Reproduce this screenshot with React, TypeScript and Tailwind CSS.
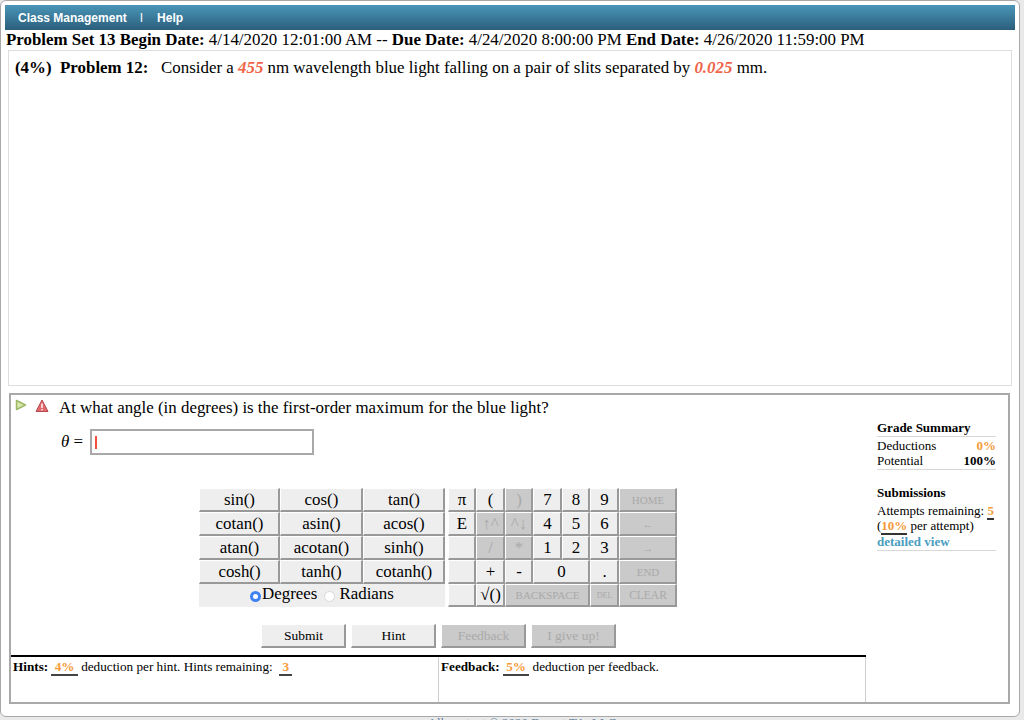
import { ReactNode } from 'react';

const funcs = [
  ['sin()', 'cos()', 'tan()'],
  ['cotan()', 'asin()', 'acos()'],
  ['atan()', 'acotan()', 'sinh()'],
  ['cosh()', 'tanh()', 'cotanh()'],
];

function Key({ children, off, className }: { children?: ReactNode; off?: boolean; className?: string }) {
  return (
    <div
      className={`flex items-center justify-center overflow-hidden pt-[1px] pl-[1px] border-t border-l border-t-white border-l-white border-r-2 border-b-2 border-r-[#999] border-b-[#999] ${
        off ? 'bg-[#cacaca] text-[#a9a9a9]' : 'bg-[#eeeeee] text-black'
      } ${className ?? ''}`}
    >
      {children}
    </div>
  );
}

function Pct({ children, className }: { children: ReactNode; className?: string }) {
  return <span className={`font-bold text-[#f59a37] border-b-2 border-b-[#444] ${className ?? ''}`}>{children}</span>;
}

function Calculator() {
  return (
    <div className="flex ml-[188px] mt-[33px] text-[16.9px] leading-none">
      <div className="w-[246px]">
        <div className="grid grid-cols-[81px_83px_82px] grid-rows-[24px_24px_24px_24px]">
          {funcs.flat().map(f => (
            <Key key={f}>{f}</Key>
          ))}
        </div>
        <div className="flex items-center justify-center h-[23px] bg-[#eeeeee] pb-[3px]">
          <span className="mt-[5px] mr-[1px] w-[11px] h-[11px] rounded-full bg-white border-[3px] border-[#3f82f2]" />
          <span>Degrees</span>
          <span className="mt-[5px] ml-[7px] mr-[4px] w-[11px] h-[11px] rounded-full bg-white border border-[#d8d8d8]" />
          <span>Radians</span>
        </div>
      </div>
      <div className="ml-[3px] grid grid-cols-[28px_29px_28px_29px_28px_29px_58px] grid-rows-[24px_24px_24px_24px_23px]">
        <Key>π</Key>
        <Key>(</Key>
        <Key off>)</Key>
        <Key>7</Key>
        <Key>8</Key>
        <Key>9</Key>
        <Key off className="text-[11px]">HOME</Key>

        <Key>E</Key>
        <Key off>↑^</Key>
        <Key off>^↓</Key>
        <Key>4</Key>
        <Key>5</Key>
        <Key>6</Key>
        <Key off className="text-[11px]">←</Key>

        <Key />
        <Key off>/</Key>
        <Key off>*</Key>
        <Key>1</Key>
        <Key>2</Key>
        <Key>3</Key>
        <Key off className="text-[11px]">→</Key>

        <Key />
        <Key>+</Key>
        <Key>-</Key>
        <Key className="col-span-2">0</Key>
        <Key>.</Key>
        <Key off className="text-[11px]">END</Key>

        <Key />
        <Key>√()</Key>
        <Key off className="col-span-3 text-[11px]">BACKSPACE</Key>
        <Key off className="text-[8px]">DEL</Key>
        <Key off className="text-[11.5px]">CLEAR</Key>
      </div>
    </div>
  );
}

function ActionButton({ label, off }: { label: string; off?: boolean }) {
  return (
    <Key off={off} className="w-[85px] h-[24px] text-[13.5px]">
      {label}
    </Key>
  );
}

export default function App() {
  return (
    <div className="h-[720px] overflow-hidden bg-[#e9e9e9] text-black font-['Liberation_Serif',serif]">
      <div className="w-[1020px] h-[717px] px-[4px] pt-[4px] bg-white border border-[#a8a8a8] rounded-[6px]">
        <div className="h-[25px] flex items-center pl-[13px] bg-gradient-to-b from-[#4a96b8] to-[#2b5f7c] text-white text-[12px] font-bold font-['Liberation_Sans',sans-serif]">
          <span>Class Management</span>
          <span className="font-normal ml-[13px] mr-[14px]">I</span>
          <span>Help</span>
        </div>
        <div className="h-[20px] pl-[1px] flex items-center text-[16.9px] whitespace-pre">
          <b>Problem Set 13 Begin Date:</b> 4/14/2020 12:01:00 AM -- <b>Due Date:</b> 4/24/2020 8:00:00 PM <b>End Date:</b> 4/26/2020 11:59:00 PM
        </div>
        <div className="ml-[3px] mr-[3px] h-[336px] border border-[#dddddd] pl-[6px] pt-[7px] text-[16.9px] leading-[20px] whitespace-pre">
          <b>(4%)  Problem 12:</b>
          {'   Consider a '}
          <b className="italic text-[#f0654a]">455</b>
          {' nm wavelength blue light falling on a pair of slits separated by '}
          <b className="italic text-[#f0654a]">0.025</b>
          {' mm.'}
        </div>
        <div className="ml-[4px] mr-[5px] mt-[7px] h-[311px] border-2 border-[#a9a9a9] flex">
          <div className="w-[855px] flex flex-col">
            <div className="h-[30px] flex items-start pt-[4px] pl-[4px] text-[16.9px]">
              <svg width="12" height="12" viewBox="0 0 12 12">
                <path d="M1.5 1.5 L10.5 6 L1.5 10.5 Z" fill="#d9e8a8" stroke="#9cb96a" strokeWidth="1.5" strokeLinejoin="round" />
              </svg>
              <svg width="14" height="14" viewBox="0 0 14 14" className="ml-[8px]">
                <path d="M7 1 L13 12.5 H1 Z" fill="#e2686c" stroke="#b5484c" strokeLinejoin="round" />
                <rect x="6.3" y="4.5" width="1.4" height="4.5" fill="#fff" />
                <rect x="6.3" y="10" width="1.4" height="1.4" fill="#fff" />
              </svg>
              <span className="ml-[10px] -mt-[4px]">At what angle (in degrees) is the first-order maximum for the blue light?</span>
            </div>
            <div className="flex items-center h-[26px] mt-[4px] pl-[50px] text-[16.9px]">
              <span className="w-[29px] whitespace-pre">
                <i>θ</i> =
              </span>
              <div className="w-[224px] h-[26px] border-2 border-[#a9a9a9] flex items-center pl-[3px]">
                <span className="w-[2px] h-[13px] bg-[#f0503c]" />
              </div>
            </div>
            <Calculator />
            <div className="flex gap-[5px] ml-[250px] mt-[17px]">
              <ActionButton label="Submit" />
              <ActionButton label="Hint" />
              <ActionButton label="Feedback" off />
              <ActionButton label="I give up!" off />
            </div>
            <div className="mt-[7px] flex-1 flex border-t-2 border-t-black text-[13.2px] leading-[15px] whitespace-pre">
              <div className="w-[428px] pl-[2px] pt-[2px] border-r border-r-[#cfcfcf]">
                <b>Hints:</b> <Pct> 4% </Pct> deduction per hint. Hints remaining:  <Pct> 3 </Pct>
              </div>
              <div className="flex-1 pl-[2px] pt-[2px] border-r border-r-[#cfcfcf]">
                <b>Feedback:</b> <Pct> 5% </Pct> deduction per feedback.
              </div>
            </div>
          </div>
          <div className="flex-1 pl-[11px] pr-[12px] pt-[25px] text-[13px] leading-[15px]">
            <div className="font-bold border-b border-b-[#d8d8d8] pb-[1px]">Grade Summary</div>
            <div className="flex justify-between pt-[1px]">
              <span>Deductions</span>
              <span className="font-bold text-[#f59a37]">0%</span>
            </div>
            <div className="flex justify-between border-b border-b-[#d8d8d8] pb-[1px]">
              <span>Potential</span>
              <b>100%</b>
            </div>
            <div className="font-bold mt-[15px] pb-[3px]">Submissions</div>
            <div className="whitespace-nowrap">
              Attempts remaining: <span className="font-bold text-[#f59a37] border-b-2 border-b-[#333]">5</span>
            </div>
            <div>
              (<span className="font-bold text-[#f59a37] border-b-2 border-b-[#333]">10%</span> per attempt)
            </div>
            <div className="font-bold text-[#4b9dbf] border-b border-b-[#d8d8d8] pb-[1px] mt-[1px]">detailed view</div>
          </div>
        </div>
      </div>
      <div className="text-center text-[13px] leading-none text-[#5f7f9c] -mt-[1px] pl-[20px]">All content © 2020 Expert TA, LLC</div>
    </div>
  );
}
